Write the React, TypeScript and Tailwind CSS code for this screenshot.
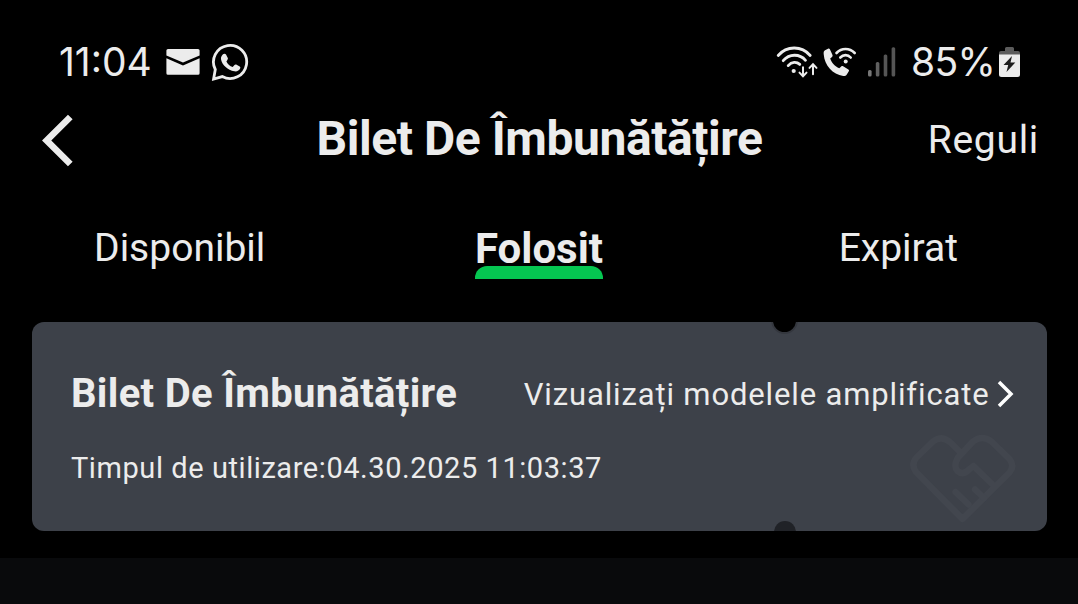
import { useState } from "react";

const tabs = ["Disponibil", "Folosit", "Expirat"];

const MailIcon = () => (
  <svg width="34" height="28" viewBox="0 0 34 28" fill="#ececec">
    <path d="M2 1h30a1.6 1.6 0 0 1 1.6 1.6V7.600L17 14.600 .4 7.600V2.600A1.600 1.600 0 0 1 2 1z" />
    <path d="M.4 10.200 17 17.400l16.600-7.200V25.200a1.600 1.600 0 0 1-1.600 1.600H2a1.600 1.600 0 0 1-1.600-1.600z" />
  </svg>
);

const WhatsAppIcon = () => (
  <svg width="38" height="38" viewBox="0 0 38 38" fill="none">
    <path
      d="M2.600 36 4.300 26.500A16.600 16.600 0 1 1 11.300 33.600z"
      stroke="#ececec"
      strokeWidth="2.800"
      strokeLinejoin="miter"
    />
    <path
      d="M12 11.300c.8-.9 2.400-.9 3 .1l1.800 3.700c.3.800 0 1.400-.6 2.100l-.8 1.200c1.500 2.800 3.400 4.500 6.300 5.600l1.800-2c.5-.6 1-.7 1.700-.4l3.500 1.800c.8.500.8 1.400.4 2.200-1 2.200-3.300 3.200-5.800 2.700-6.600-1.400-12-6.200-13.200-11.600-.5-2.200.4-4 1.900-5.400z"
      fill="#ececec"
    />
  </svg>
);

const WifiIcon = () => (
  <svg width="42" height="32" viewBox="0 0 42 32" fill="none" stroke="#ececec" strokeLinecap="round">
    <path d="M2.200 9.500c8.500-10 23.500-10 32 0" strokeWidth="2.800" />
    <path d="M7.200 14.700c6-7.200 16.500-7.200 22.300-.4" strokeWidth="2.800" />
    <path d="M12.200 19.600c3.500-4 8.500-4 11.600-1.200" strokeWidth="2.800" />
    <circle cx="17.700" cy="25" r="2.100" fill="#ececec" stroke="none" />
    <path d="M27 21.200V30M23.500 26.600l3.500 3.600 3.500-3.600M37 28.200v-9.800M33.500 21.900l3.500-3.600 3.500 3.600" strokeWidth="2" />
  </svg>
);

const WifiCallIcon = () => (
  <svg width="36" height="32" viewBox="0 0 36 32" fill="none">
    <path
      d="M3 4.300 6 2.700c.8-.4 1.500-.1 1.900.6l2.600 5.800c.3.700.1 1.300-.5 1.800L8.200 12.500c1.300 4.200 4.800 8 9.100 9.700l1.900-1.700c.6-.5 1.200-.6 1.900-.2l5.300 3.100c.7.500.8 1.200.4 1.800l-2 3.200c-.8 1.200-2 1.800-3.600 1.600C10.700 28.300 2.600 20 1.700 8.300 1.500 6.300 1.700 5.100 3 4.300z"
      fill="#ececec"
    />
    <path d="M14.500 7c5-5.400 13-5.400 18.200 0M18.300 11.500c3-3.200 7.500-3.200 10.400 0" stroke="#ececec" strokeWidth="2.600" strokeLinecap="round" />
    <circle cx="23.700" cy="15.500" r="2" fill="#ececec" />
  </svg>
);

const SignalIcon = () => (
  <svg width="30" height="32" viewBox="0 0 30 32" fill="#555">
    <rect x="1" y="24" width="3.600" height="6.500" rx="1.500" fill="#777" />
    <rect x="8.800" y="16" width="3.600" height="14.500" rx="1.500" fill="#606060" />
    <rect x="16.700" y="8.500" width="3.600" height="22" rx="1.500" />
    <rect x="24.600" y="1.300" width="3.600" height="29.200" rx="1.500" />
  </svg>
);

const BatteryIcon = () => (
  <svg width="22" height="32" viewBox="0 0 22 32">
    <path d="M6 5V2.500A1.500 1.500 0 0 1 7.500 1h6A1.500 1.500 0 0 1 15 2.500V5h4a2 2 0 0 1 2 2v2H0V7a2 2 0 0 1 2-2z" fill="#5c5c5c" />
    <path d="M0 8.500h21v20a2.500 2.500 0 0 1-2.500 2.500h-16A2.500 2.500 0 0 1 0 28.500z" fill="#ececec" />
    <path d="M13 10 4.500 19h4.700L7.500 26 16.300 16.600h-4.800z" fill="#1c1c1c" />
  </svg>
);

const HeartHandshake = () => (
  <svg
    className="absolute right-[29px] bottom-[5px]"
    width="110"
    height="96"
    viewBox="0 0 110 96"
    fill="none"
    stroke="#42464e"
    strokeWidth="6.500"
    strokeLinecap="round"
    strokeLinejoin="round"
  >
    <path d="M52.500 22.500 43 13Q34 4.500 25 11.500L8.500 27.500Q2.500 34.500 8 42L54.500 89 101.500 42.500Q107 36 101.500 29L83.500 11.500Q74 4.500 65 11.500L50 27.500Q45 36 49.500 41Q55 46 61 39.500L65.500 36 84 54" />
    <path d="M67 59.500 76 68M47.500 62 60.500 74.500" />
  </svg>
);

const App = () => {
  const [activeTab, setActiveTab] = useState("Folosit");

  return (
    <div className="flex h-[604px] w-[1078px] flex-col overflow-hidden bg-[#090a0c] font-['Roboto',sans-serif] text-[#ececec]">
      <div className="h-[558px] bg-black">
        {/* Status bar */}
        <div className="flex h-[100px] items-center justify-between pt-6 pr-[57px] pl-[58px]">
          <div className="flex items-center">
            <span className="w-[108px] pb-0.5 pl-px font-['Inter',sans-serif] text-[39px] leading-none">
              11:04
            </span>
            <MailIcon />
            <div className="ml-[11px]">
              <WhatsAppIcon />
            </div>
          </div>
          <div className="flex items-center">
            <WifiIcon />
            <div className="ml-1">
              <WifiCallIcon />
            </div>
            <div className="ml-[9px]">
              <SignalIcon />
            </div>
            <span className="ml-3.5 w-[88px] pb-0.5 font-['Inter',sans-serif] text-[39px] leading-none tracking-[-0.7px] whitespace-nowrap">
              85%
            </span>
            <BatteryIcon />
          </div>
        </div>

        {/* Header */}
        <div className="grid h-20 grid-cols-[1fr_auto_1fr] items-center pr-[39px] pl-10">
          <button>
            <svg width="36" height="54" viewBox="0 0 36 54" fill="none">
              <path d="M30.300 4 6.700 27.500 30.300 51" stroke="#ececec" strokeWidth="6.600" />
            </svg>
          </button>
          <h1 className="pb-0.5 text-[48px] leading-none font-bold tracking-[-0.45px]">Bilet De Îmbunătățire</h1>
          <button className="justify-self-end text-[39px] leading-none tracking-[0.7px]">Reguli</button>
        </div>

        {/* Tabs */}
        <div className="grid h-[142px] grid-cols-3 pt-[45px]">
          {tabs.map((tab) => (
            <button
              key={tab}
              onClick={() => setActiveTab(tab)}
              className="flex flex-col items-center text-[39px]"
            >
              <span
                className={
                  tab === activeTab
                    ? "h-[41px] text-[42px] leading-[48px] font-bold"
                    : "h-[41px] leading-[46px]"
                }
              >
                {tab}
              </span>
              {tab === activeTab && <span className="h-[13px] w-32 rounded-t-[12px] bg-[#05c651]" />}
            </button>
          ))}
        </div>

        {/* Ticket card */}
        <div className="relative ml-[31.5px] h-[209px] w-[1015px] overflow-hidden rounded-xl bg-[#3d4149] pt-12 pr-[32px] pl-[39.5px]">
          <div className="absolute -top-[13px] left-[741px] size-[23px] rounded-full bg-black ring-2 ring-[#34373e]" />
          <div className="absolute -bottom-[12px] left-[742px] size-[22px] rounded-full bg-[#202227]" />
          <HeartHandshake />
          <div className="flex h-12 items-center">
            <h2 className="text-[40px] leading-none font-bold tracking-[0.32px]">Bilet De Îmbunătățire</h2>
            <button className="ml-auto flex items-center">
              <span className="text-[31px] leading-none tracking-[0.86px]">Vizualizați modelele amplificate</span>
              <svg className="ml-[7px]" width="18" height="28" viewBox="0 0 18 28" fill="none">
                <path d="M2 2 14 14 2 26" stroke="#fff" strokeWidth="3.500" />
              </svg>
            </button>
          </div>
          <p className="mt-8 text-[29px] leading-9 tracking-[0.57px]">Timpul de utilizare:04.30.2025 11:03:37</p>
        </div>
      </div>
    </div>
  );
};

export default App;
